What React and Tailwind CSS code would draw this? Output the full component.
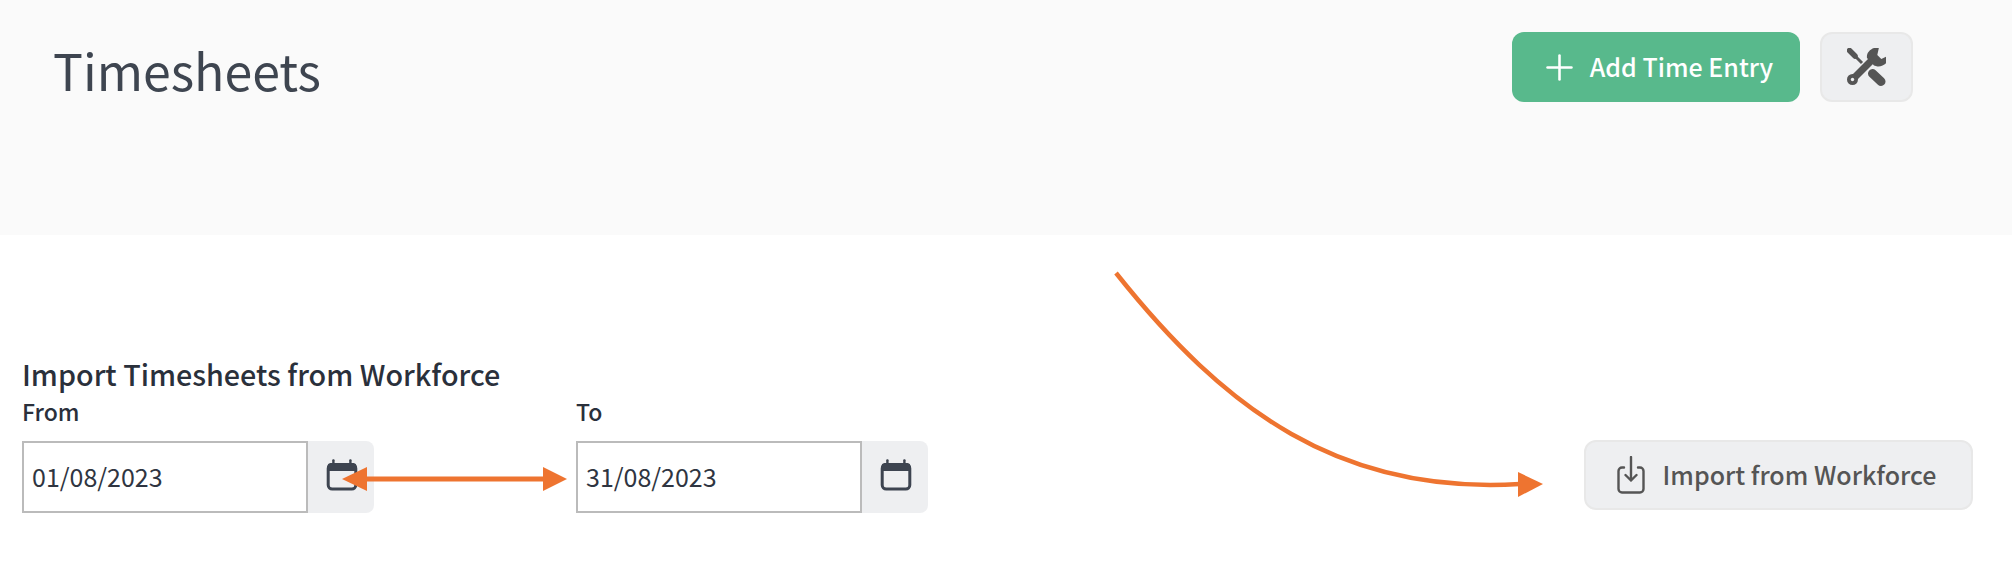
import { Plus } from "lucide-react";

const font = "font-['Noto_Sans_CJK_JP','Noto_Sans',sans-serif]";

function CalendarIcon() {
  return (
    <svg width="32" height="32" viewBox="0 0 32 32" fill="none" className="text-[#3d4450]">
      <rect x="2.200" y="5.500" width="27.600" height="24.500" rx="4" stroke="currentColor" strokeWidth="3" />
      <path d="M4.500 4h23a3.500 3.500 0 0 1 3 3.500V12H1.500V7.500A3.500 3.500 0 0 1 4.500 4z" fill="currentColor" />
      <rect x="6.200" y="0.300" width="2.400" height="6" rx="1" fill="currentColor" />
      <rect x="23.200" y="0.300" width="2.400" height="6" rx="1" fill="currentColor" />
    </svg>
  );
}

function ImportIcon() {
  return (
    <svg width="28" height="38" viewBox="0 0 28 38" fill="none" stroke="#555" strokeWidth="2.400" strokeLinecap="round" strokeLinejoin="round">
      <path d="M7 11.500H5a3.500 3.500 0 0 0-3.500 3.500v18a3.500 3.500 0 0 0 3.500 3.500h18a3.500 3.500 0 0 0 3.500-3.500V15a3.500 3.500 0 0 0-3.500-3.500h-2" />
      <path d="M14 1v23.500M8.500 19l5.500 5.500 5.500-5.500" />
    </svg>
  );
}

function ToolsIcon() {
  return (
    <svg width="39" height="39" viewBox="13 8 39 39" fill="none">
      <path d="M20 15L28 23" stroke="#555" strokeWidth="3" />
      <path d="M15.500 10.500L21 16" stroke="#555" strokeWidth="5.500" strokeLinecap="round" />
      <path d="M38.500 33.500L47 41.500" stroke="#555" strokeWidth="9" strokeLinecap="round" />
      <path d="M18.500 39.500L37 21" stroke="#555" strokeWidth="7" />
      <circle cx="18.500" cy="39.500" r="5.500" fill="#555" />
      <circle cx="18.500" cy="39.500" r="1.700" fill="#eeeff1" />
      <path d="M45 7.300L43.300 15L47.300 19L55 15.300C55.500 21.500 50 27 43.500 26.500L40 25.500L33 18C32 12 38 7 45 7.300Z" fill="#555" />
    </svg>
  );
}

function DateField({ label, value }) {
  return (
    <div className="flex flex-col">
      <label className="text-[23px] leading-[30px] font-medium text-[#2a303b] mb-[15px]">{label}</label>
      <div className="flex h-[72px]">
        <div className="w-[286px] border-2 border-[#bbbbbb] flex items-center pl-[8px] text-[25px] text-[#2f3541]">{value}</div>
        <div className="w-[66px] bg-[#eeeff1] rounded-r-lg flex items-center justify-center pb-[4px] pl-[2px]">
          <CalendarIcon />
        </div>
      </div>
    </div>
  );
}

export default function App() {
  return (
    <div className={`relative w-[2012px] h-[572px] bg-white overflow-hidden ${font}`}>
      <header className="h-[235px] bg-[#fafafa] flex justify-between pl-[53px] pr-[99px] pt-[32px]">
        <h1 className="text-[50px] leading-[74px] font-normal text-[#3e4550]">Timesheets</h1>
        <div className="flex gap-[20px] h-[70px]">
          <button className="w-[288px] bg-[#58b98c] rounded-xl flex items-center justify-center gap-[10px] text-white text-[25px] font-medium">
            <Plus size={41} strokeWidth={1.500} />
            Add Time Entry
          </button>
          <button className="w-[93px] bg-[#eeeff1] border-2 border-[#e8e8e8] rounded-xl flex items-center justify-center">
            <ToolsIcon />
          </button>
        </div>
      </header>

      <section className="flex justify-between items-end pl-[22px] pr-[39px] pt-[116px]">
        <div>
          <h2 className="text-[28.700px] leading-[45px] font-medium text-[#2a303b]">Import Timesheets from Workforce</h2>
          <div className="flex gap-[202px]">
            <DateField label="From" value="01/08/2023" />
            <DateField label="To" value="31/08/2023" />
          </div>
        </div>
        <button className="w-[389px] h-[70px] mb-[3px] pr-[4px] bg-[#eeeff1] border-2 border-[#e8e8e8] rounded-xl flex items-center justify-center gap-[18px] text-[25px] font-medium text-[#555555]">
          <ImportIcon />
          Import from Workforce
        </button>
      </section>

      {/* annotation arrows drawn over the page */}
      <svg className="absolute inset-0 pointer-events-none" width="2012" height="572" fill="none">
        <path d="M365 479H545" stroke="#ee7430" strokeWidth="5" />
        <path d="M342 479L367 467V491Z" fill="#ee7430" />
        <path d="M567 479L543 467V491Z" fill="#ee7430" />
        <path d="M1116 273C1225 410 1340 495 1520 484" stroke="#ee7430" strokeWidth="4.500" />
        <path d="M1543 484L1518 472V497Z" fill="#ee7430" />
      </svg>
    </div>
  );
}
